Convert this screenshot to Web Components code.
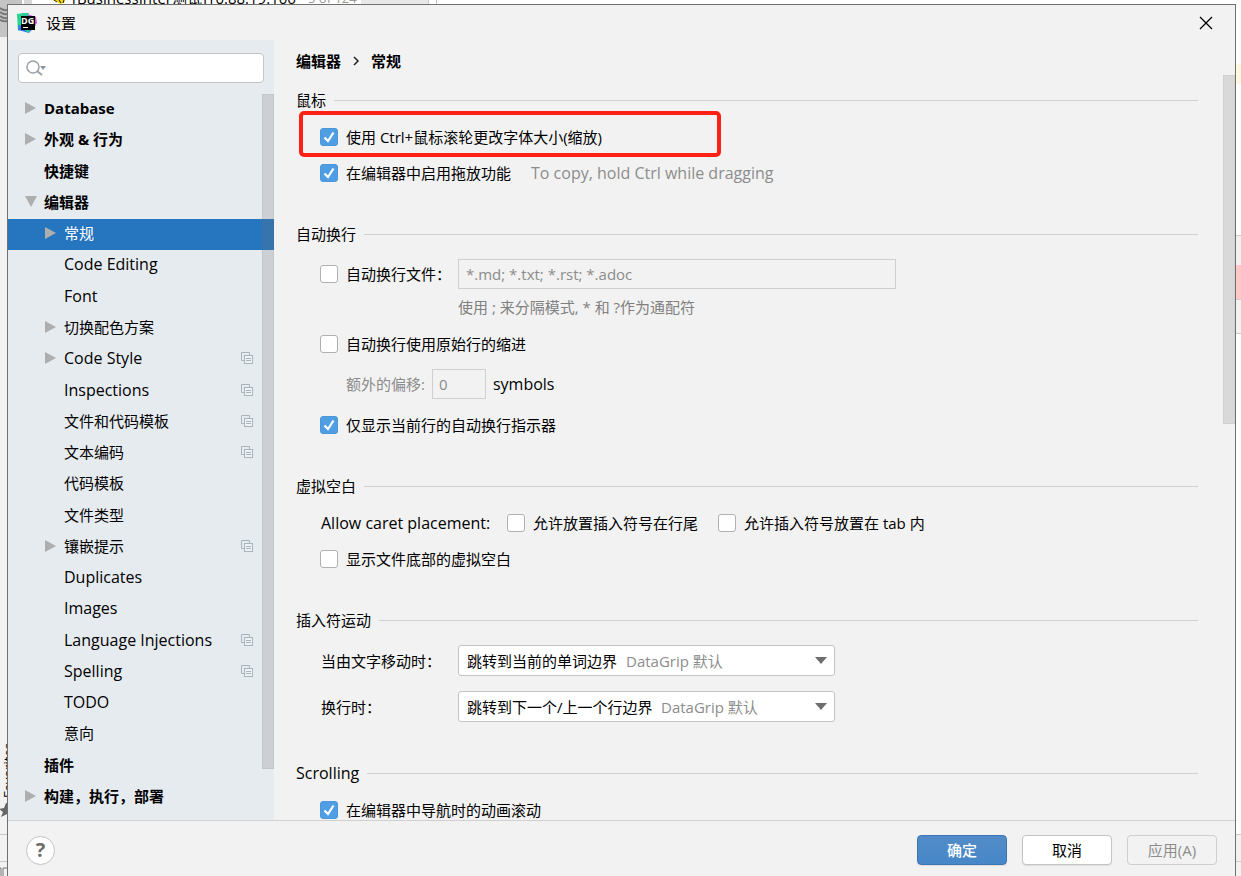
<!DOCTYPE html>
<html lang="zh-CN">
<head>
<meta charset="utf-8">
<title>设置</title>
<style>
  html, body { margin: 0; height: 100%; }
  body {
    font: 15px/24px "Open Sans", "Noto Sans CJK SC", sans-serif;
    color: #000;
    overflow: hidden;
    --panel: #f2f2f2;
    --line: #d0d0d0;
    --edge: #c4c4c4;
    --muted: #8c8c8c;
    --latin: 16px;
  }
</style>
</head>
<body>
<ide-desktop>
  <settings-window>
    <settings-tree slot="tree">
      <tree-item group arrow="closed">Database</tree-item>
      <tree-item group arrow="closed">外观 &amp; 行为</tree-item>
      <tree-item group>快捷键</tree-item>
      <tree-item group arrow="open">编辑器</tree-item>
      <tree-item arrow="closed" selected>常规</tree-item>
      <tree-item lang="en">Code Editing</tree-item>
      <tree-item lang="en">Font</tree-item>
      <tree-item arrow="closed">切换配色方案</tree-item>
      <tree-item lang="en" arrow="closed" scoped>Code Style</tree-item>
      <tree-item lang="en" scoped>Inspections</tree-item>
      <tree-item scoped>文件和代码模板</tree-item>
      <tree-item scoped>文本编码</tree-item>
      <tree-item>代码模板</tree-item>
      <tree-item>文件类型</tree-item>
      <tree-item arrow="closed" scoped>镶嵌提示</tree-item>
      <tree-item lang="en">Duplicates</tree-item>
      <tree-item lang="en">Images</tree-item>
      <tree-item lang="en" scoped>Language Injections</tree-item>
      <tree-item lang="en" scoped>Spelling</tree-item>
      <tree-item lang="en">TODO</tree-item>
      <tree-item>意向</tree-item>
      <tree-item group>插件</tree-item>
      <tree-item group arrow="closed">构建，执行，部署</tree-item>
    </settings-tree>

    <settings-section heading="鼠标">
      <check-row checked marked>使用 Ctrl+鼠标滚轮更改字体大小(缩放)</check-row>
      <check-row checked>在编辑器中启用拖放功能<span slot="hint" lang="en">To copy, hold Ctrl while dragging</span></check-row>
    </settings-section>
    <settings-section heading="自动换行" roomy>
      <text-row label="自动换行文件：" value="*.md; *.txt; *.rst; *.adoc" hint="使用 ; 来分隔模式, * 和 ?作为通配符"></text-row>
      <check-row>自动换行使用原始行的缩进</check-row>
      <number-row label="额外的偏移:" value="0" unit="symbols"></number-row>
      <check-row checked>仅显示当前行的自动换行指示器</check-row>
    </settings-section>
    <settings-section heading="虚拟空白">
      <check-group label="Allow caret placement:">
        <check-row>允许放置插入符号在行尾</check-row>
        <check-row>允许插入符号放置在 tab 内</check-row>
      </check-group>
      <check-row>显示文件底部的虚拟空白</check-row>
    </settings-section>
    <settings-section heading="插入符运动" roomy>
      <select-row label="当由文字移动时：" value="跳转到当前的单词边界" note="DataGrip 默认"></select-row>
      <select-row label="换行时：" value="跳转到下一个/上一个行边界" note="DataGrip 默认"></select-row>
    </settings-section>
    <settings-section heading="Scrolling" lang="en">
      <check-row checked>在编辑器中导航时的动画滚动</check-row>
    </settings-section>

    <dialog-button slot="actions" kind="primary">确定</dialog-button>
    <dialog-button slot="actions">取消</dialog-button>
    <dialog-button slot="actions" kind="disabled">应用(A)</dialog-button>
  </settings-window>
</ide-desktop>

<script>
class Part extends HTMLElement {
  connectedCallback() {
    if (this.shadowRoot) return;
    const root = this.attachShadow({ mode: 'open' });
    root.innerHTML = '<style>*{box-sizing:border-box}input,select,button{font:inherit;color:inherit;margin:0}</style>' + this.render();
  }
  attr(name) { return this.getAttribute(name) || ''; }
}

/* The IDE that stays visible round the dialog. */
customElements.define('ide-desktop', class extends Part {
  render() { return `
    <style>
      :host { display: grid; grid-template: 4px minmax(0, 1fr) / 7px minmax(0, 1fr) 5px; height: 100vh; background: #fff; }
      .top { grid-column: 1 / -1; display: flex; overflow: hidden; background: #fff; }
      .rail { flex: none; width: 22px; background: #c4c4c4; }
      .stub { flex: none; width: 30px; background: linear-gradient(90deg, #fff 2px, #d8d8d8 2px 10px, #fff 10px); }
      .bee { flex: none; width: 20px; height: 4px; }
      .name { flex: none; width: 236px; height: 24px; margin-top: -14px; white-space: nowrap; }
      .count { flex: none; width: 53px; height: 24px; margin-top: -14px; color: #999; font-size: 13px; white-space: nowrap; }
      .tab { flex: none; width: 68px; background: #e8e8e8; border-right: 1px solid #ccc; }
      .tab + .tab { width: 8px; background: #fff; border-color: #c9b8d8; }
      .left { display: flex; flex-direction: column; overflow: hidden; background: #f2f2f2; }
      .left .tool { flex: none; height: 33px; background: #c4c4c4; }
      .fav { margin-top: auto; width: 16px; font-size: 13px; line-height: 16px; writing-mode: vertical-rl; transform: rotate(180deg); }
      .left svg { flex: none; display: block; }
      .left .status { flex: none; height: 27px; border-top: 1px solid #c8c8c8; }
      .left .status.last { height: 15px; }
      .left .gap { flex: none; height: 14px; }
      .right { display: flex; flex-direction: column; }
      .right i { flex: none; display: block; }
    </style>
    <div class="top">
      <span class="rail"></span><span class="stub"></span>
      <svg class="bee" viewBox="0 0 20 4"><path d="M0 0H13L12 3 8 4 5 2Z" fill="#f0d800"/><path d="M2 0l3 2M7 0l2 3M12 0l-1 3" stroke="#222"/></svg>
      <span class="name">[BusinessInter测试]10.88.19.106</span>
      <span class="count">5 of 124</span><span class="tab"></span><span class="tab"></span>
    </div>
    <div class="left">
      <span class="tool"><svg width="7" height="24" viewBox="0 0 7 24"><path d="M0 4Q4 7 7 6M0 8Q4 11 7 10M0 12Q4 15 7 14M0 16Q4 18 7 17" fill="none" stroke="#777" stroke-width="2"/></svg></span>
      <span class="fav">Favorites</span>
      <svg width="7" height="22" viewBox="0 0 7 22"><path d="M6 5L4 10-1 11 3 14 1 19 7 16V5Z" fill="#666"/></svg>
      <span class="gap"></span><span class="status"></span>
      <span class="status last"><svg width="7" height="14" viewBox="0 0 7 14"><path d="M0 6h1v8M3 14V6h4" fill="none" stroke="#777"/></svg></span>
    </div>
    <slot></slot>
    <div class="right">
      <i style="height:60px"></i><i style="height:20px;background:#fff8dc"></i><i style="height:151px"></i>
      <i style="height:30px;background:#f0f0f0;border-top:1px solid #ccc"></i>
      <i style="height:34px;background:#ffc8c8"></i>
      <i style="height:35px;background:#f2f2f2;border:solid #ccc;border-width:1px 0"></i>
      <i style="flex:1"></i>
      <i style="height:27px;background:#f2f2f2;border-top:1px solid #ccc"></i>
      <i style="height:15px;background:#f2f2f2;border-top:1px solid #ccc"></i>
    </div>`; }
});

customElements.define('settings-window', class extends Part {
  render() { return `
    <style>
      :host { display: flex; flex-direction: column; min-width: 0; min-height: 0; background: var(--panel); border: 1px solid #707070; border-bottom: 0; }
      header { flex: none; display: flex; align-items: center; gap: 9px; height: 35px; padding: 0 22px 0 9px; }
      header button { margin-left: auto; padding: 0; width: 14px; height: 14px; border: 0; background: none; }
      svg { display: block; }
      h1 { margin: 0; font: inherit; }
      .logo { font: 700 9px/10px "Open Sans", sans-serif; }
      .body { flex: 1; min-height: 0; display: grid; grid-template-columns: 266px minmax(0, 1fr); border-bottom: 1px solid var(--line); }
      main { position: relative; min-height: 0; overflow: hidden; padding: 9px 37px 0 22px; }
      nav { display: flex; align-items: center; gap: 11px; height: 24px; margin-bottom: 15px; font-weight: 700; }
      .sections { display: grid; gap: 31px; }
      .bar { position: absolute; top: 35px; right: 0; width: 12px; height: 349px; background: #d9d9d9; border: 1px solid #d0d0d0; }
      footer { flex: none; display: flex; align-items: center; gap: 15px; height: 55px; padding: 3px 18px 0; }
      .help { width: 29px; height: 29px; padding: 0; margin-right: auto; border: 1px solid var(--edge); border-radius: 50%; background: #fff; color: #6e6e6e; font-weight: 700; font-size: 20px; line-height: 26px; }
    </style>
    <header>
      <svg class="logo" width="20" height="20" viewBox="0 0 20 20" role="img" aria-label="DataGrip">
        <path d="M0 1L8 0 5 15 1 18Z" fill="#21d789"/><path d="M7 0L19 4 20 10 14 18 11 14Z" fill="#c64df0"/>
        <path d="M1 12L9 14 19 12 12 20 1 17Z" fill="#3a7bea"/><path d="M5 0H12L10 7 2 8Z" fill="#2fcb9a"/><path d="M8 17l5-1-1 4Z" fill="#29d58b"/>
        <rect x="4" y="3" width="14" height="14"/>
        <text x="4" y="11" fill="#fff">DG</text>
        <path d="M6 14.500h5" stroke="#fff"/>
      </svg>
      <h1>设置</h1>
      <button type="button" aria-label="关闭"><svg width="14" height="14" viewBox="0 0 14 14"><path d="M1 1l12 12M13 1L1 13" stroke="#000" stroke-width="1.300"/></svg></button>
    </header>
    <div class="body">
      <slot name="tree"></slot>
      <main>
        <nav><span>编辑器</span><svg width="8" height="12" viewBox="0 0 8 12"><path d="M2 2l4 4-4 4" fill="none" stroke="#222" stroke-width="1.500"/></svg><span>常规</span></nav>
        <div class="sections"><slot></slot></div>
        <div class="bar"></div>
      </main>
    </div>
    <footer>
      <button class="help" type="button" aria-label="帮助">?</button>
      <slot name="actions"></slot>
    </footer>`; }
});

customElements.define('settings-tree', class extends Part {
  render() { return `
    <style>
      :host { position: relative; display: flex; flex-direction: column; min-height: 0; padding: 13px 0 7px; background: #e6ebf0; }
      .search { flex: none; display: flex; align-items: center; height: 30px; margin: 0 10px 11px; padding: 0 7px; gap: 4px; background: #fff; border: 1px solid var(--edge); border-radius: 4px; }
      .search input { flex: 1; min-width: 0; border: 0; outline: 0; background: none; padding: 0; }
      .list { flex: 1; min-height: 0; display: flex; flex-direction: column; }
      .bar { position: absolute; top: 54px; right: 0; width: 12px; height: 675px; background: rgba(115, 115, 115, .22); border: 1px solid rgba(115, 115, 115, .1); }
    </style>
    <label class="search">
      <svg width="21" height="18" viewBox="0 0 21 18"><circle cx="7" cy="8" r="6" fill="none" stroke="#9aa3a9" stroke-width="1.500"/><path d="M11 12l5 4" stroke="#9aa3a9" stroke-width="2"/><path d="M14 7h6l-3 4Z" fill="#8c969c"/></svg>
      <input type="text" aria-label="搜索">
    </label>
    <div class="list" role="tree"><slot></slot></div>
    <div class="bar"></div>`; }
});

customElements.define('tree-item', class extends Part {
  render() {
    this.setAttribute('role', 'treeitem');
    const arrows = { closed: 'M0 0L11 6 0 12Z', open: 'M0 0H12L6 11Z' };
    const arrow = arrows[this.attr('arrow')];
    return `
    <style>
      :host { flex: 1; min-height: 0; display: flex; align-items: center; gap: 7px; padding: 0 21px 3px 37px; white-space: nowrap; }
      :host([lang=en]) { font-size: var(--latin); }
      :host([group]) { padding-left: 17px; font-weight: 700; }
      :host([selected]) { background: #2675bf; color: #fff; }
      svg { flex: none; display: block; }
      .scope { margin-left: auto; }
    </style>
    <svg width="12" height="12" viewBox="0 0 12 12">${arrow ? `<path d="${arrow}" fill="#aeaeae"/>` : ''}</svg>
    <span><slot></slot></span>
    ${this.hasAttribute('scoped') ? '<svg class="scope" width="12" height="12" viewBox="0 0 12 12"><path d="M3 8.500H.5V.5H8.500V3" fill="none" stroke="#a9b5bd"/><rect x="3.500" y="3.500" width="8" height="8" fill="#eef2f5" stroke="#a9b5bd"/><path d="M5 6.500h5M5 8.500h5" stroke="#a9b5bd"/></svg>' : ''}`;
  }
});

customElements.define('settings-section', class extends Part {
  render() { return `
    <style>
      :host { display: block; }
      h2 { display: flex; align-items: center; gap: 8px; margin: 0 0 7px; font: inherit; }
      :host([lang=en]) h2 { font-size: var(--latin); }
      h2::after { content: ""; flex: 1; height: 1px; background: var(--line); }
      .rows { padding-left: 24px; }
      :host([roomy]) .rows { padding-top: 6px; }
    </style>
    <h2>${this.attr('heading')}</h2>
    <div class="rows"><slot></slot></div>`; }
});

const checkCss = `
  .check { flex: none; display: grid; width: 18px; height: 18px; }
  .check > * { grid-area: 1 / 1; }
  .check input { appearance: none; width: 18px; height: 18px; border: 1px solid #b0b0b0; border-radius: 3px; background: #fff; }
  .check input:checked { background: #4f9ee3; border-color: #4b97d9; }
  .check svg { display: none; pointer-events: none; }
  .check input:checked + svg { display: block; }`;
const checkBox = on => `<span class="check"><input id="c" type="checkbox"${on ? ' checked' : ''}><svg width="18" height="18" viewBox="0 0 18 18"><path d="M4.500 9.500L8 13 13.500 4.500" fill="none" stroke="#fff" stroke-width="2.200"/></svg></span>`;

customElements.define('check-row', class extends Part {
  render() { return `
    <style>${checkCss}
      :host { position: relative; display: flex; align-items: center; height: 36px; white-space: nowrap; }
      label { padding-left: 8px; }
      .hint { color: var(--muted); padding-left: 20px; }
      ::slotted([lang=en]) { font-size: var(--latin); }
      .mark { position: absolute; left: -21px; top: -8px; width: 422px; height: 46px; border: 4px solid #ff2015; border-radius: 5px; pointer-events: none; }
    </style>
    ${checkBox(this.hasAttribute('checked'))}<label for="c"><slot></slot></label>
    <span class="hint"><slot name="hint"></slot></span>
    ${this.hasAttribute('marked') ? '<div class="mark"></div>' : ''}`; }
});

customElements.define('check-group', class extends Part {
  render() { return `
    <style>
      :host { display: flex; align-items: center; padding-left: 1px; white-space: nowrap; }
      span { width: 186px; font-size: var(--latin); }
    </style>
    <span>${this.attr('label')}</span><slot></slot>`; }
});

customElements.define('text-row', class extends Part {
  render() { return `
    <style>${checkCss}
      :host { display: grid; grid-template-columns: 18px 120px minmax(0, 438px); row-gap: 6px; align-items: center; margin-bottom: 7px; }
      label { padding-left: 8px; white-space: nowrap; }
      input[type=text] { width: 100%; height: 30px; padding: 0 7px; color: var(--muted); background: none; border: 1px solid #cfcfcf; }
      .hint { grid-column: 3; color: #808080; white-space: nowrap; }
    </style>
    ${checkBox(false)}<label for="c">${this.attr('label')}</label>
    <input type="text" disabled value="${this.attr('value')}" aria-label="${this.attr('label')}">
    <span class="hint">${this.attr('hint')}</span>`; }
});

customElements.define('number-row', class extends Part {
  render() { return `
    <style>
      :host { display: flex; align-items: center; gap: 7px; margin: 7px 0 8px; padding-left: 26px; white-space: nowrap; }
      label { color: var(--muted); }
      input { width: 54px; height: 30px; padding: 0 6px; color: var(--muted); background: none; border: 1px solid #cfcfcf; }
      span { font-size: var(--latin); }
    </style>
    <label for="n">${this.attr('label')}</label><input id="n" type="text" disabled value="${this.attr('value')}"><span>${this.attr('unit')}</span>`; }
});

customElements.define('select-row', class extends Part {
  render() { return `
    <style>
      :host { display: grid; grid-template-columns: 137px minmax(0, 377px); align-items: center; padding: 0 0 15px 1px; white-space: nowrap; }
      :host(:last-child) { padding-bottom: 8px; }
      .box { display: flex; align-items: center; gap: 8px; height: 31px; padding: 0 7px 0 8px; background: #fff; border: 1px solid var(--edge); border-radius: 3px; }
      select { appearance: none; height: 24px; padding: 0; border: 0; background: none; }
      .note { color: var(--muted); }
      svg { margin-left: auto; }
    </style>
    <label for="s">${this.attr('label')}</label>
    <div class="box"><select id="s"><option>${this.attr('value')}</option></select><span class="note">${this.attr('note')}</span>
      <svg width="12" height="7" viewBox="0 0 12 7"><path d="M0 0H12L6 7Z" fill="#6e6e6e"/></svg></div>`; }
});

customElements.define('dialog-button', class extends Part {
  render() { return `
    <style>
      :host { display: block; }
      button { display: block; width: 90px; height: 30px; padding: 0; background: #fff; border: 1px solid var(--edge); border-radius: 4px; box-shadow: 0 1px 1px rgba(0, 0, 0, .08); }
      :host([kind=primary]) button { color: #fff; font-weight: 500; background: linear-gradient(#528cc7, #4687c9); border-color: #3d75b2; }
      :host([kind=disabled]) button { color: var(--muted); background: none; box-shadow: none; border-color: #cfcfcf; }
    </style>
    <button type="button"${this.attr('kind') === 'disabled' ? ' disabled' : ''}><slot></slot></button>`; }
});
</script>
</body>
</html>
